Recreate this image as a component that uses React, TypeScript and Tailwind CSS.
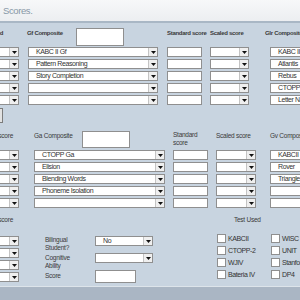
import type { ReactNode } from "react";

const font = "font-['Liberation_Sans',Arial,sans-serif]";

function Arrow() {
  return (
    <div className="flex h-full w-[9px] shrink-0 items-center justify-center border-l border-[#c4c4c4] bg-[#efefef]">
      <svg width="5" height="3" viewBox="0 0 5 3">
        <polygon points="0,0 5,0 2.5,3" fill="#111" />
      </svg>
    </div>
  );
}

function Combo({ text = "", className = "" }: { text?: string; className?: string }) {
  return (
    <div className={`flex h-[10px] border border-[#8f8f8f] bg-white ${className}`}>
      <div className="flex-1 overflow-hidden whitespace-nowrap pl-[7px] text-[7px] leading-[8px] tracking-[-0.4px] text-[#333]">
        {text}
      </div>
      <Arrow />
    </div>
  );
}

function Box({ className = "" }: { className?: string }) {
  return <div className={`border border-[#8f8f8f] bg-white ${className}`} />;
}

function Label({ children, bold, className = "" }: { children: ReactNode; bold?: boolean; className?: string }) {
  return (
    <div
      className={`leading-[8px] text-[#3a3a3a] ${
        bold ? "text-[6px] font-bold tracking-[-0.3px]" : "text-[6.5px] tracking-[-0.25px]"
      } ${className}`}
    >
      {children}
    </div>
  );
}

function Check({ label }: { label: string }) {
  return (
    <div className="flex h-[9px] items-center gap-[2px]">
      <div className="h-[9px] w-[9px] shrink-0 border border-[#8f8f8f] bg-white" />
      <span className="whitespace-nowrap text-[7px] leading-[8px] tracking-[-0.4px] text-[#333]">{label}</span>
    </div>
  );
}

function Rows({ children }: { children: ReactNode }) {
  return <div className="flex flex-col gap-[2px]">{children}</div>;
}

export default function App() {
  return (
    <div className={`flex h-[300px] w-[300px] flex-col overflow-hidden bg-[#c8d4e0] ${font}`}>
      {/* barra de título */}
      <div className="h-[21px] shrink-0 bg-gradient-to-b from-[#f7f8f9] to-[#eceef1] pl-[3px] pt-[5px] text-[9.5px] leading-[11px] tracking-[-0.4px] text-[#8797a6]">
        Scores.
      </div>
      <div className="h-[2px] shrink-0 bg-[#a9b7c5]" />

      {/* Gf / Glr */}
      <div className="flex pt-[5px]">
        <div className="-ml-[41px] w-[60px] shrink-0">
          <div className="h-[19px] pt-[1px]">
            <Label bold className="w-[44px] text-right">Standard</Label>
          </div>
          <Rows>
            <Combo />
            <Combo />
            <Combo />
            <Combo />
            <Combo />
          </Rows>
        </div>
        <div className="ml-[9px] w-[130px] shrink-0">
          <div className="flex h-[19px]">
            <Label bold className="-ml-[1px] w-[49px] pt-[1px]">Gf Composite</Label>
            <Box className="h-[18px] w-[48px]" />
          </div>
          <Rows>
            <Combo text="KABC II Gf" />
            <Combo text="Pattern Reasoning" />
            <Combo text="Story Completion" />
            <Combo />
            <Combo />
          </Rows>
        </div>
        <div className="ml-[9px] w-[35px] shrink-0">
          <div className="h-[19px] pt-[1px]">
            <Label bold className="whitespace-nowrap">Standard score</Label>
          </div>
          <Rows>
            <Box className="h-[10px]" />
            <Box className="h-[10px]" />
            <Box className="h-[10px]" />
            <Box className="h-[10px]" />
            <Box className="h-[10px]" />
          </Rows>
        </div>
        <div className="ml-[8px] w-[39px] shrink-0">
          <div className="h-[19px] pt-[1px]">
            <Label bold className="whitespace-nowrap">Scaled score</Label>
          </div>
          <Rows>
            <Combo />
            <Combo />
            <Combo />
            <Combo />
            <Combo />
          </Rows>
        </div>
        <div className="ml-[21px] w-[80px] shrink-0">
          <div className="h-[19px] pt-[1px]">
            <Label bold className="-ml-[5px] whitespace-nowrap">Glr Composite</Label>
          </div>
          <Rows>
            <Combo text="KABC III" />
            <Combo text="Atlantis" />
            <Combo text="Rebus" />
            <Combo text="CTOPP" />
            <Combo text="Letter Naming" />
          </Rows>
        </div>
      </div>

      {/* botão */}
      <div className="-ml-[20px] mt-[3px] h-[15px] w-[23px] shrink-0 border border-[#7c7c7c] bg-[#e2e2e2]" />

      {/* Ga / Gv */}
      <div className="flex pt-[8px]">
        <div className="-ml-[41px] w-[60px] shrink-0">
          <div className="h-[19px] pt-[1px]">
            <Label className="w-[54px] whitespace-nowrap text-right">Scaled score</Label>
          </div>
          <Rows>
            <Combo />
            <Combo />
            <Combo />
            <Combo />
            <Combo />
          </Rows>
        </div>
        <div className="ml-[15px] w-[131px] shrink-0">
          <div className="flex h-[19px]">
            <Label className="w-[48px] pt-[1px]">Ga Composite</Label>
            <Box className="h-[17px] w-[48px]" />
          </div>
          <Rows>
            <Combo text="CTOPP Ga" />
            <Combo text="Elision" />
            <Combo text="Blending Words" />
            <Combo text="Phoneme Isolation" />
            <Combo />
          </Rows>
        </div>
        <div className="ml-[8px] w-[35px] shrink-0">
          <div className="h-[19px]">
            <Label>
              Standard
              <br />
              score
            </Label>
          </div>
          <Rows>
            <Box className="h-[10px]" />
            <Box className="h-[10px]" />
            <Box className="h-[10px]" />
            <Box className="h-[10px]" />
            <Box className="h-[10px]" />
          </Rows>
        </div>
        <div className="ml-[8px] w-[40px] shrink-0">
          <div className="h-[19px] pt-[1px]">
            <Label className="whitespace-nowrap">Scaled score</Label>
          </div>
          <Rows>
            <Combo />
            <Combo />
            <Combo />
            <Combo />
            <Combo />
          </Rows>
        </div>
        <div className="ml-[14px] w-[80px] shrink-0">
          <div className="h-[19px] pt-[1px]">
            <Label className="whitespace-nowrap">Gv Composite</Label>
          </div>
          <Rows>
            <Combo text="KABCII" />
            <Combo text="Rover" />
            <Combo text="Triangles" />
            <Combo />
            <Combo />
          </Rows>
        </div>
      </div>

      {/* bilíngue / testes usados */}
      <div className="flex pt-[8px]">
        <div className="-ml-[41px] w-[60px] shrink-0">
          <div className="h-[20px]">
            <Label className="w-[54px] whitespace-nowrap text-right">Scaled score</Label>
          </div>
          <Rows>
            <Combo />
            <Combo />
            <Combo />
            <Combo />
          </Rows>
        </div>
        <div className="ml-[26px] flex w-[108px] shrink-0 flex-col pt-[20px]">
          <div className="flex h-[17px]">
            <Label className="w-[50px]">
              Bilingual
              <br />
              Student?
            </Label>
            <Combo text="No" className="w-[58px]" />
          </div>
          <div className="flex h-[17px]">
            <Label className="w-[50px] pt-[1px]">
              Cognitive
              <br />
              Ability
            </Label>
            <Combo className="w-[58px]" />
          </div>
          <div className="flex h-[13px]">
            <Label className="w-[50px] pt-[2px]">Score</Label>
            <Box className="h-[13px] w-[41px]" />
          </div>
        </div>
        <div className="ml-[64px] shrink-0">
          <div className="h-[18px] pl-[17px]">
            <Label className="whitespace-nowrap">Test Used</Label>
          </div>
          <div className="grid grid-cols-[54px_60px] gap-y-[3px]">
            <Check label="KABCII" />
            <Check label="WISC V" />
            <Check label="CTOPP-2" />
            <Check label="UNIT" />
            <Check label="WJIV" />
            <Check label="Stanford" />
            <Check label="Bateria IV" />
            <Check label="DP4" />
          </div>
        </div>
      </div>

      <div className="mt-auto h-[14px] shrink-0 border-t border-[#dde4ea] bg-[#aab6c4]" />
    </div>
  );
}
